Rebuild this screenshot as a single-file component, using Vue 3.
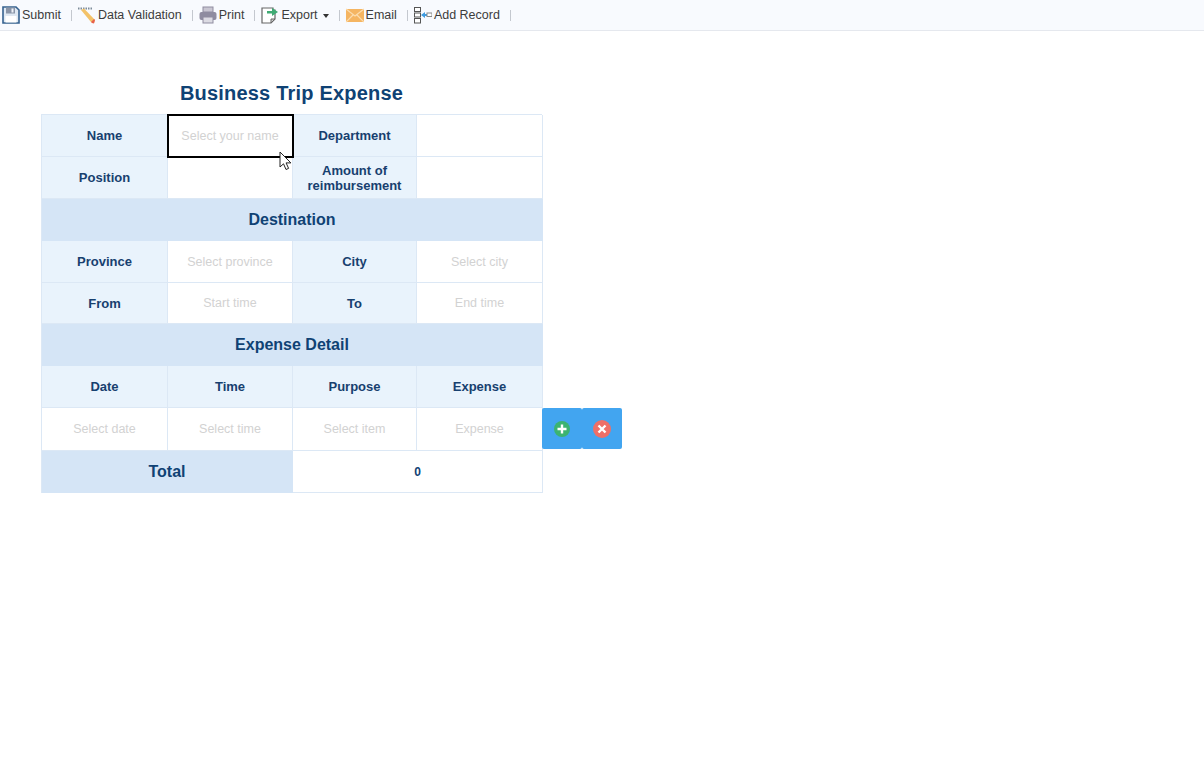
<script setup>
const tools = [
  { id: 'save', label: 'Submit' },
  { id: 'pencil', label: 'Data Validation' },
  { id: 'print', label: 'Print' },
  { id: 'export', label: 'Export', caret: true },
  { id: 'mail', label: 'Email' },
  { id: 'add', label: 'Add Record' },
]
const cells = [
  { t: 'Name', c: 'head' },
  { t: 'Select your name', c: 'ph active' },
  { t: 'Department', c: 'head' },
  { t: '', c: 'ph' },
  { t: 'Position', c: 'head' },
  { t: '', c: 'ph' },
  { t: 'Amount of reimbursement', c: 'head tight' },
  { t: '', c: 'ph' },
  { t: 'Destination', c: 'section span4' },
  { t: 'Province', c: 'head' },
  { t: 'Select province', c: 'ph' },
  { t: 'City', c: 'head' },
  { t: 'Select city', c: 'ph' },
  { t: 'From', c: 'head' },
  { t: 'Start time', c: 'ph' },
  { t: 'To', c: 'head' },
  { t: 'End time', c: 'ph' },
  { t: 'Expense Detail', c: 'section span4' },
  { t: 'Date', c: 'head' },
  { t: 'Time', c: 'head' },
  { t: 'Purpose', c: 'head' },
  { t: 'Expense', c: 'head' },
  { t: 'Select date', c: 'ph' },
  { t: 'Select time', c: 'ph' },
  { t: 'Select item', c: 'ph' },
  { t: 'Expense', c: 'ph' },
  { t: 'Total', c: 'section span2 total' },
  { t: '0', c: 'value span2' },
]
</script>

<template>
  <div class="page">
    <div class="toolbar">
      <div v-for="tool in tools" :key="tool.id" class="tool">
        <svg class="icon" viewBox="0 0 18 18" width="18" height="18">
          <template v-if="tool.id === 'save'">
            <path d="M1 1h13l3 3v13H1z" fill="#dfe8f2" stroke="#35618f" stroke-width="1.6" />
            <rect x="4" y="1.5" width="9" height="6" fill="#8a95a8" />
            <rect x="9.5" y="2.5" width="2" height="4" fill="#eef2f7" />
            <rect x="3.5" y="10" width="11" height="6.5" fill="#fff" />
          </template>
          <template v-else-if="tool.id === 'pencil'">
            <path d="M0 2.5h14" stroke="#7d8b99" stroke-width="2" stroke-dasharray="1.5 1" />
            <path d="M3 4l3-1.500 11 11.500-1 3-3-1z" fill="#f3c268" />
            <path d="M13 16l3-3 1 1-1 3.500-2-.5z" fill="#e8604c" />
          </template>
          <template v-else-if="tool.id === 'print'">
            <rect x="4" y="1" width="10" height="5" fill="#c9c6d2" stroke="#8f8ca0" />
            <rect x="0.500" y="6" width="17" height="8" rx="2" fill="#8f8ca0" />
            <rect x="4" y="11" width="10" height="6" fill="#dcdbe3" stroke="#8f8ca0" />
          </template>
          <template v-else-if="tool.id === 'export'">
            <path d="M1 2h11v2h2v9l-4 4H1z" fill="#fff" stroke="#666" stroke-width="1.200" />
            <path d="M14 13h-4v4z" fill="#ccc" stroke="#666" />
            <path d="M6 5h5V2l6 4-6 4V7.500H6z" fill="#3faa74" />
          </template>
          <template v-else-if="tool.id === 'mail'">
            <rect x="0" y="3" width="18" height="13" fill="#f5b562" />
            <path d="M0 3l9 7 9-7M0 16l7-7M18 16l-7-7" fill="none" stroke="#fbdcae" stroke-width="1.200" />
          </template>
          <template v-else>
            <rect x="0.500" y="1.500" width="6" height="4" fill="#fff" stroke="#555" />
            <rect x="0.500" y="7" width="6" height="4" fill="#fff" stroke="#555" />
            <rect x="0.500" y="12.500" width="6" height="4.500" fill="#fff" stroke="#555" />
            <path d="M7 9l4-3v2h2v2h-2v2z" fill="#3f9be0" />
            <rect x="13" y="7" width="5" height="3.500" fill="#fff" stroke="#888" />
          </template>
        </svg>
        <span class="label">{{ tool.label }}</span>
        <span v-if="tool.caret" class="caret"></span>
        <span class="sep"></span>
      </div>
    </div>

    <div class="sheet">
      <h1 class="title">Business Trip Expense</h1>
      <div class="table">
        <div v-for="(cell, i) in cells" :key="i" class="cell" :class="cell.c">
          <span>{{ cell.t }}</span>
          <svg v-if="cell.c.includes('active')" class="cursor" viewBox="0 0 13 20" width="13" height="20">
            <path d="M1 1v15l3.500-3.200 2.500 5.700 2.600-1.100-2.500-5.500h4.800z" fill="#fff" stroke="#222" stroke-width="1" />
          </svg>
        </div>
        <div class="actions">
          <button class="btn" type="button" aria-label="Add row">
            <svg viewBox="0 0 18 18" width="18" height="18">
              <circle cx="9" cy="9" r="8" fill="#3cb371" />
              <path d="M9 4.500v9M4.500 9h9" stroke="#fff" stroke-width="2.400" />
            </svg>
          </button>
          <button class="btn" type="button" aria-label="Remove row">
            <svg viewBox="0 0 18 18" width="18" height="18">
              <circle cx="9" cy="9" r="9" fill="#ee6f68" />
              <path d="M5.500 5.500l7 7M12.500 5.500l-7 7" stroke="#fff" stroke-width="2.400" />
            </svg>
          </button>
        </div>
      </div>
    </div>
  </div>
</template>

<style>
html, body { background: #fff; }
</style>

<style scoped>
.page {
  width: 1204px;
  height: 784px;
  overflow: hidden;
  font-family: "Liberation Sans", Arial, sans-serif;
  background: #fff;
}
.toolbar {
  display: flex;
  align-items: center;
  height: 30px;
  padding-left: 2px;
  box-sizing: content-box;
  background: #f8fafe;
  border-bottom: 1px solid #e5e8ee;
}
.tool {
  display: flex;
  align-items: center;
}
.icon { flex: none; margin-right: 2px; }
.label {
  font-size: 12.500px;
  color: #3c3c3c;
  white-space: nowrap;
}
.caret {
  width: 0;
  height: 0;
  margin-left: 5px;
  border-left: 3.500px solid transparent;
  border-right: 3.500px solid transparent;
  border-top: 4px solid #333;
  margin-top: 2px;
}
.sep {
  width: 1px;
  height: 11px;
  background: #c4c8cf;
  margin: 0 6px 0 10px;
}
.sheet {
  padding: 50px 0 0 41px;
}
.title {
  width: 501px;
  margin: 0;
  height: 33px;
  line-height: 24px;
  text-align: center;
  font-size: 20px;
  font-weight: 700;
  letter-spacing: 0.200px;
  color: #0f4274;
}
.table {
  position: relative;
  width: 501px;
  display: grid;
  grid-template-columns: 126px 125px 124px 126px;
  grid-template-rows: 42px 42px 42px 42px 41px 42px 42px 43px 42px;
  box-sizing: border-box;
  border-top: 1px solid #dce8f5;
  border-left: 1px solid #dce8f5;
}
.cell {
  display: flex;
  align-items: center;
  justify-content: center;
  box-sizing: border-box;
  text-align: center;
  font-size: 13px;
  border-right: 1px solid #dce8f5;
  border-bottom: 1px solid #dce8f5;
  background: #fff;
  position: relative;
}
.head {
  background: #e9f3fc;
  color: #17406f;
  font-weight: 700;
}
.tight { line-height: 15px; padding: 0 6px; }
.ph { color: #d2d2d2; font-size: 12.500px; }
.section {
  background: #d5e5f6;
  color: #0f4274;
  font-size: 16px;
  font-weight: 700;
  border-right-color: #d5e5f6;
  border-bottom-color: #d5e5f6;
}
.span4 { grid-column: span 4; }
.span2 { grid-column: span 2; }
.value { color: #0f4274; font-size: 12px; font-weight: 700; }
.active {
  outline: 2px solid #000;
  outline-offset: -1px;
  z-index: 1;
}
.cursor {
  position: absolute;
  left: 111px;
  top: 36px;
}
.actions {
  position: absolute;
  left: 500px;
  top: 293px;
  display: flex;
}
.btn {
  display: flex;
  align-items: center;
  justify-content: center;
  width: 40px;
  height: 41px;
  padding: 0;
  border: 0;
  border-radius: 2px;
  background: #42a5f0;
}
</style>
